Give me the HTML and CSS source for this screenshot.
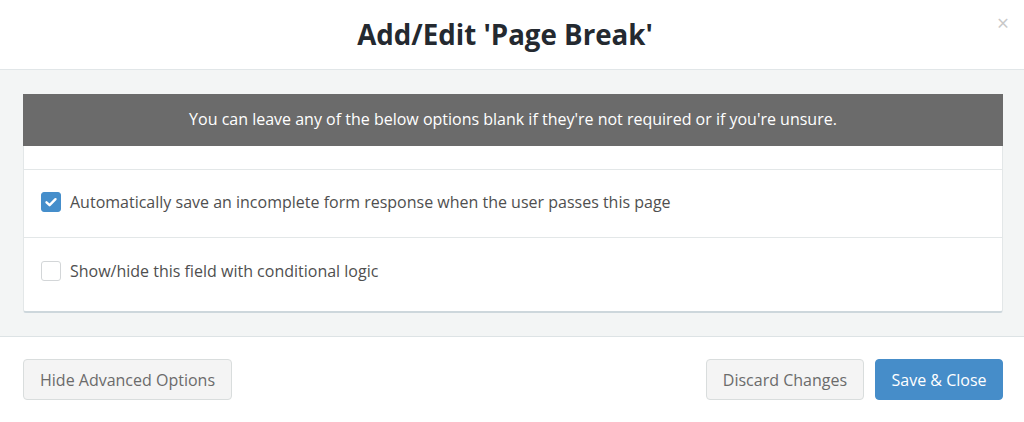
FILE: index.html
```html
<!DOCTYPE html>
<html>
<head>
<meta charset="utf-8">
<link rel="stylesheet" href="styles.css">
</head>
<body>
<div class="modal">
  <header class="modal-header">
    <h1 class="title">Add/Edit 'Page Break'</h1>
    <span class="close">&#215;</span>
  </header>
  <main class="modal-body">
    <section class="card">
      <div class="notice">You can leave any of the below options blank if they're not required or if you're unsure.</div>
      <div class="spacer"></div>
      <label class="row">
        <span class="check checked"><svg viewBox="0 0 20 20" width="20" height="20"><path d="M5.5 10.3 L8.6 13.2 L14.5 7.2" fill="none" stroke="#fff" stroke-width="2.4" stroke-linecap="round" stroke-linejoin="round"/></svg></span>
        <span class="label">Automatically save an incomplete form response when the user passes this page</span>
      </label>
      <label class="row last">
        <span class="check"></span>
        <span class="label">Show/hide this field with conditional logic</span>
      </label>
    </section>
  </main>
  <footer class="modal-footer">
    <button class="btn">Hide Advanced Options</button>
    <div class="actions">
      <button class="btn">Discard Changes</button>
      <button class="btn primary">Save &amp; Close</button>
    </div>
  </footer>
</div>
</body>
</html>
```
FILE: styles.css
```css
* { box-sizing: border-box; }
html, body { margin: 0; padding: 0; }
body {
  width: 1024px;
  height: 422px;
  overflow: hidden;
  background: #fff;
  font-family: "Open Sans", "Liberation Sans", sans-serif;
}
.modal { display: flex; flex-direction: column; height: 422px; }
.modal-header {
  position: relative;
  height: 70px;
  border-bottom: 1px solid #e1e6e8;
  display: flex;
  align-items: center;
  justify-content: center;
}
.title {
  margin: 0;
  font-size: 27.7px;
  font-weight: 700;
  color: #242930;
  line-height: 36px;
  padding-right: 14px;
  padding-bottom: 1px;
}
.close {
  position: absolute;
  right: 15px;
  top: 11px;
  font-size: 21px;
  color: #c8c8c8;
  line-height: 24px;
}
.modal-body {
  background: #f3f5f5;
  padding: 24px 21px 24px 23px;
  height: 267px;
  border-bottom: 1px solid #dde3e5;
}
.card {
  background: #fff;
  border: 1px solid #e3e7e8;
  border-bottom: 2px solid #cdd7dc;
  border-radius: 0 0 3px 3px;
  height: 219px;
}
.notice {
  background: #6b6b6b;
  color: #fff;
  height: 52px;
  margin: -1px -1px 0 -1px;
  display: flex;
  align-items: center;
  justify-content: center;
  font-size: 16px;
  padding-bottom: 2px;
}
.spacer { height: 24px; border-bottom: 1px solid #e3e7e8; }
.row {
  display: flex;
  align-items: center;
  gap: 9px;
  height: 68px;
  padding-left: 17px;
  padding-bottom: 3px;
  border-bottom: 1px solid #e3e7e8;
}
.row.last { border-bottom: none; height: 72px; padding-bottom: 6px; }
.check {
  width: 20px;
  height: 20px;
  border: 1px solid #d3d6d8;
  border-radius: 3px;
  background: #fff;
  display: flex;
}
.check.checked { background: #458ecb; border-color: #458ecb; }
.check svg { margin: -1px; }
.label { font-size: 16px; color: #4f4f4f; }
.modal-footer {
  flex: 1;
  display: flex;
  align-items: center;
  justify-content: space-between;
  padding: 0 21px 0 23px;
}
.actions { display: flex; gap: 11px; }
.btn {
  height: 41px;
  padding: 0 16px;
  font-family: inherit;
  font-size: 16px;
  color: #6b6b6b;
  background: #f4f4f4;
  border: 1px solid #d9dddd;
  border-radius: 4px;
}
.btn.primary {
  padding: 0 15.5px;
  background: #468dc9;
  border-color: #468dc9;
  color: #fff;
}
```
